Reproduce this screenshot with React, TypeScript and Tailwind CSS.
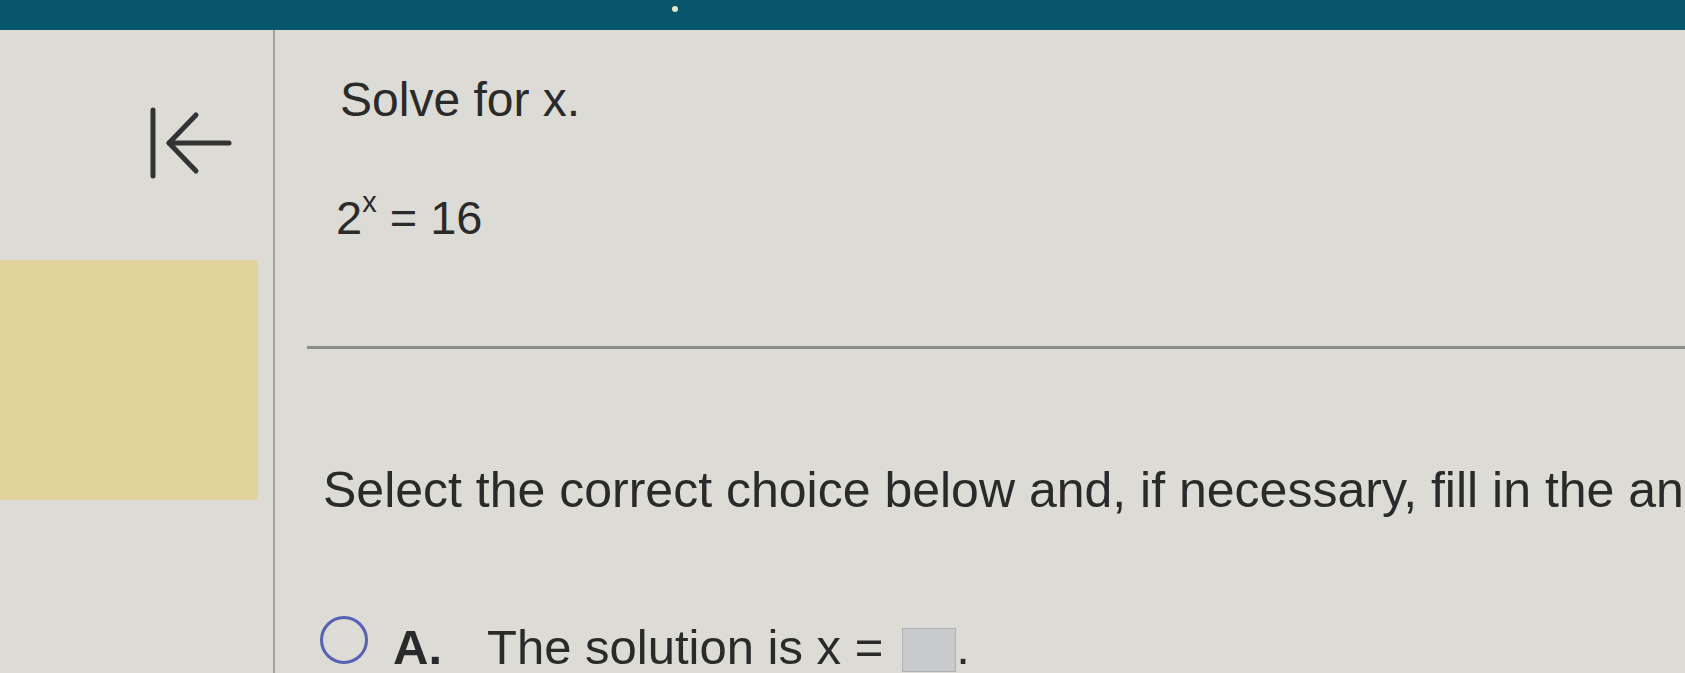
export default function App() {
  return (
    <div className="h-[673px] w-full overflow-hidden bg-[#dcdbd5] font-['Liberation_Sans',Arial,sans-serif] text-[#2a2a2a]">
      <div className="h-[30px] bg-[#08566c] pl-[672px] pt-[6px]">
        <div className="w-[6px] h-[6px] rounded-full bg-[#e8e6c8]" />
      </div>
      <div className="flex h-[643px]">
        <aside className="w-[275px] shrink-0 border-r-2 border-[#a3a39f] flex flex-col">
          <div className="h-[230px] pl-[150px] pt-[77px]">
            <svg width="82" height="72" viewBox="0 0 82 72" fill="none" stroke="#333" strokeWidth="5" strokeLinecap="round" strokeLinejoin="round">
              <path d="M3 3v66" />
              <path d="M19 36h60" />
              <path d="M46 8L19 36l27 28" />
            </svg>
          </div>
          <div className="h-[240px] w-[258px] bg-[#e2d39b]" />
        </aside>
        <main className="flex-1 min-w-0 overflow-hidden">
          <h1 className="pl-[65px] pt-[46px] text-[48px] leading-none">Solve for x.</h1>
          <p className="pl-[61px] mt-[70px] text-[47px] leading-none whitespace-nowrap">
            2<span className="relative -top-[22px] text-[29px]">x</span> = 16
          </p>
          <div className="ml-[32px] mt-[105px] h-[3px] bg-[#8c8c8a]" />
          <p className="ml-[48px] mt-[116px] text-[50px] leading-none whitespace-nowrap">
            Select the correct choice below and, if necessary, fill in the answer box to complete your choice.
          </p>
          <div className="ml-[45px] mt-[108px] flex items-start whitespace-nowrap text-[49px] leading-none">
            <span className="w-[48px] h-[48px] shrink-0 rounded-full border-[3px] border-[#5761b3] -mt-[7px]" />
            <span className="ml-[25px] font-bold">A.</span>
            <span className="ml-[45px]">The solution is x =</span>
            <span className="ml-[19px] mt-[5px] w-[54px] h-[44px] shrink-0 bg-[#c9cacd] border border-[#aeb0b4]" />
            <span>.</span>
          </div>
        </main>
      </div>
    </div>
  );
}
